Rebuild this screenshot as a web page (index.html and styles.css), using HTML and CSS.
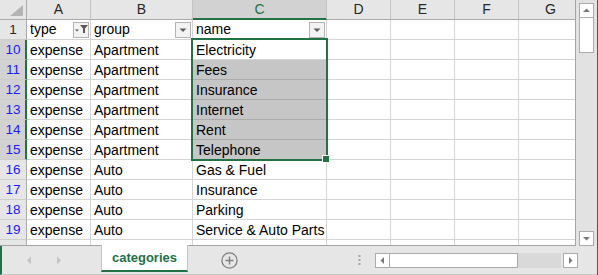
FILE: index.html
```html
<!DOCTYPE html>
<html lang="en">
<head>
    <meta charset="UTF-8">
    <meta name="viewport" content="width=device-width, initial-scale=1.0">
    <title>categories</title>
    <link rel="stylesheet" href="styles.css">
</head>
<body>
<div class="window">
    <div class="main">
        <div class="sheet">
            <div class="row">
                <div class="corner"><svg width="14" height="12" viewBox="0 0 14 12"><polygon points="13,0 13,11 0,11" fill="#b4b4b4"/></svg></div>
                <div class="colhead">A</div>
                <div class="colhead">B</div>
                <div class="colhead active">C</div>
                <div class="colhead">D</div>
                <div class="colhead">E</div>
                <div class="colhead">F</div>
                <div class="colhead">G</div>
            </div>
            <div class="row">
                <div class="rowhead plain">1</div>
                <div class="cell filter">type
                    <span class="dd"><svg width="14" height="14" viewBox="0 0 14 14"><path d="M6 2H14L11 5.5V10H9V5.5Z" fill="#595959"/><path d="M1 6.5H5L3 8.5Z" fill="#595959"/></svg></span>
                </div>
                <div class="cell filter">group
                    <span class="dd"><svg width="14" height="14" viewBox="0 0 14 14"><path d="M3.5 5.5H10.5L7 9Z" fill="#606060"/></svg></span>
                </div>
                <div class="cell filter">name
                    <span class="dd"><svg width="14" height="14" viewBox="0 0 14 14"><path d="M3.5 5.5H10.5L7 9Z" fill="#606060"/></svg></span>
                </div>
                <div class="cell"></div><div class="cell"></div><div class="cell"></div><div class="cell"></div>
            </div>
            <div class="row">
                <div class="rowhead sel">10</div>
                <div class="cell">expense</div><div class="cell">Apartment</div><div class="cell">Electricity</div>
                <div class="cell"></div><div class="cell"></div><div class="cell"></div><div class="cell"></div>
            </div>
            <div class="row">
                <div class="rowhead sel">11</div>
                <div class="cell">expense</div><div class="cell">Apartment</div><div class="cell sel">Fees</div>
                <div class="cell"></div><div class="cell"></div><div class="cell"></div><div class="cell"></div>
            </div>
            <div class="row">
                <div class="rowhead sel">12</div>
                <div class="cell">expense</div><div class="cell">Apartment</div><div class="cell sel">Insurance</div>
                <div class="cell"></div><div class="cell"></div><div class="cell"></div><div class="cell"></div>
            </div>
            <div class="row">
                <div class="rowhead sel">13</div>
                <div class="cell">expense</div><div class="cell">Apartment</div><div class="cell sel">Internet</div>
                <div class="cell"></div><div class="cell"></div><div class="cell"></div><div class="cell"></div>
            </div>
            <div class="row">
                <div class="rowhead sel">14</div>
                <div class="cell">expense</div><div class="cell">Apartment</div><div class="cell sel">Rent</div>
                <div class="cell"></div><div class="cell"></div><div class="cell"></div><div class="cell"></div>
            </div>
            <div class="row">
                <div class="rowhead sel">15</div>
                <div class="cell">expense</div><div class="cell">Apartment</div><div class="cell sel">Telephone</div>
                <div class="cell"></div><div class="cell"></div><div class="cell"></div><div class="cell"></div>
            </div>
            <div class="row">
                <div class="rowhead">16</div>
                <div class="cell">expense</div><div class="cell">Auto</div><div class="cell">Gas &amp; Fuel</div>
                <div class="cell"></div><div class="cell"></div><div class="cell"></div><div class="cell"></div>
            </div>
            <div class="row">
                <div class="rowhead">17</div>
                <div class="cell">expense</div><div class="cell">Auto</div><div class="cell">Insurance</div>
                <div class="cell"></div><div class="cell"></div><div class="cell"></div><div class="cell"></div>
            </div>
            <div class="row">
                <div class="rowhead">18</div>
                <div class="cell">expense</div><div class="cell">Auto</div><div class="cell">Parking</div>
                <div class="cell"></div><div class="cell"></div><div class="cell"></div><div class="cell"></div>
            </div>
            <div class="row">
                <div class="rowhead">19</div>
                <div class="cell">expense</div><div class="cell">Auto</div><div class="cell">Service &amp; Auto Parts</div>
                <div class="cell"></div><div class="cell"></div><div class="cell"></div><div class="cell"></div>
            </div>
            <div class="row">
                <div class="rowhead"></div>
                <div class="cell"></div><div class="cell"></div><div class="cell"></div>
                <div class="cell"></div><div class="cell"></div><div class="cell"></div><div class="cell"></div>
            </div>

            <!-- selection C10:C15 -->
            <div class="selection"></div>
            <div class="fill-handle"></div>
        </div>

        <div class="vscroll">
            <div class="sbtn"><svg width="13" height="13" viewBox="0 0 13 13"><path d="M3 8H10L6.5 4.5Z" fill="#7a7a7a"/></svg></div>
            <div class="vthumb"></div>
            <div class="spacer"></div>
            <div class="sbtn"><svg width="13" height="13" viewBox="0 0 13 13"><path d="M3 5H10L6.5 8.5Z" fill="#7a7a7a"/></svg></div>
        </div>
    </div>

    <div class="tabbar">
        <div class="tab-nav">
            <svg width="6" height="9" viewBox="0 0 6 9"><path d="M5 0.5V8.5L1 4.5Z" fill="#c3c3c3"/></svg>
            <svg width="6" height="9" viewBox="0 0 6 9"><path d="M1 0.5V8.5L5 4.5Z" fill="#c3c3c3"/></svg>
        </div>
        <div class="tab">categories</div>
        <svg class="add" width="17" height="17" viewBox="0 0 17 17"><circle cx="8.5" cy="8.5" r="7.6" fill="none" stroke="#7f7f7f" stroke-width="1.3"/><path d="M8.5 4.5V12.5M4.5 8.5H12.5" stroke="#7f7f7f" stroke-width="1.4"/></svg>
        <svg class="split" width="3" height="11" viewBox="0 0 3 11"><rect x="0.5" y="0" width="2" height="2" fill="#a6a6a6"/><rect x="0.5" y="4" width="2" height="2" fill="#a6a6a6"/><rect x="0.5" y="8" width="2" height="2" fill="#a6a6a6"/></svg>
        <div class="hscroll">
            <div class="sbtn"><svg width="13" height="13" viewBox="0 0 13 13"><path d="M8 3V10L4.5 6.5Z" fill="#7a7a7a"/></svg></div>
            <div class="hthumb"></div>
            <div class="htrack"></div>
            <div class="sbtn right"><svg width="13" height="13" viewBox="0 0 13 13"><path d="M5 3V10L8.5 6.5Z" fill="#7a7a7a"/></svg></div>
        </div>
    </div>
</div>
</body>
</html>
```

FILE: styles.css
```css
* {
    box-sizing: border-box;
}
body {
    margin: 0;
    font-family: "Liberation Sans", Arial, sans-serif;
    background: #fff;
}
.window {
    width: 598px;
    height: 275px;
    border-right: 1px solid #217346;
    background: #e6e6e6;
    overflow: hidden;
}
.main {
    display: flex;
}
.sheet {
    position: relative;
    width: 576px;
    height: 246px;
    overflow: hidden;
    background: #fff;
    border-right: 1px solid #a5a5a5;
    border-bottom: 1px solid #a5a5a5;
}
.row {
    display: grid;
    grid-template-columns: 27px 64px 102px 134px 64px 64px 64px 64px;
    height: 20px;
    width: 583px;
}
.row > div {
    border-right: 1px solid #d4d4d4;
    border-bottom: 1px solid #d4d4d4;
    font-size: 14px;
    line-height: 19px;
    white-space: nowrap;
    overflow: hidden;
}
.row > .corner {
    background: #e6e6e6;
    border-right-color: #ababab;
    border-bottom-color: #ababab;
    display: flex;
    justify-content: flex-end;
    align-items: flex-end;
    padding: 0 2px 2px 0;
}
.row > .colhead {
    background: #e6e6e6;
    border-right-color: #c3c3c3;
    border-bottom-color: #ababab;
    text-align: center;
    color: #262626;
}
.row > .colhead.active {
    background: #d2d2d2;
    color: #217346;
    border-bottom: 2px solid #217346;
    line-height: 18px;
}
.row > .rowhead {
    background: #e6e6e6;
    border-right-color: #ababab;
    border-bottom-color: #cdcdcd;
    text-align: center;
    color: #1a1aff;
    font-size: 13.5px;
}
.row > .rowhead.plain {
    color: #262626;
}
.row > .rowhead.sel {
    background: #d2d2d2;
    border-right: 2px solid #217346;
    padding-left: 1px;
}
.cell {
    padding: 1px 3px 0;
    color: #000;
}
.row > .cell.sel {
    background: #c6c6c6;
    border-bottom-color: #ababab;
}
.cell.filter {
    display: flex;
    justify-content: space-between;
    align-items: center;
    padding: 0 1px 0 3px;
}
.dd {
    display: flex;
    align-items: center;
    justify-content: center;
    width: 16px;
    height: 16px;
    border: 1px solid #b4b4b4;
    background: #f3f3f3;
}
.selection {
    position: absolute;
    left: 191px;
    top: 38px;
    width: 137px;
    height: 123px;
    border: 2px solid #217346;
}
.fill-handle {
    position: absolute;
    left: 322px;
    top: 155px;
    width: 8px;
    height: 8px;
    background: #217346;
    border: 1px solid #fff;
}

/* scrollbars */
.vscroll {
    width: 21px;
    height: 246px;
    padding: 3px 3px 0;
    display: flex;
    flex-direction: column;
    background: #e2e2e2;
}
.sbtn {
    width: 15px;
    height: 15px;
    flex: none;
    border: 1px solid #ababab;
    background: #fff;
    display: flex;
    align-items: center;
    justify-content: center;
}
.vthumb {
    height: 35px;
    flex: none;
    border: 1px solid #ababab;
    border-top: none;
    background: #fff;
}
.spacer {
    flex: 1;
}

.tabbar {
    display: flex;
    align-items: center;
    height: 29px;
    border-left: 2px solid #217346;
    border-bottom: 1px solid #c6c6c6;
}
.tab-nav {
    display: flex;
    gap: 24px;
    width: 99px;
    padding-left: 24px;
}
.tab {
    position: relative;
    align-self: flex-start;
    margin-top: -1px;
    width: 87px;
    height: 27px;
    background: #fff;
    border-left: 1px solid #c3c3c3;
    border-right: 1px solid #c3c3c3;
    border-bottom: 2px solid #217346;
    color: #217346;
    font-weight: bold;
    font-size: 13px;
    text-align: center;
    line-height: 25px;
}
.add {
    margin-left: 33px;
}
.split {
    margin-left: 120px;
}
.hscroll {
    display: flex;
    margin-left: 14px;
    width: 203px;
    height: 15px;
}
.hthumb {
    width: 128px;
    border: 1px solid #ababab;
    border-left: none;
    background: #fff;
}
.htrack {
    width: 43px;
    background: #d9d9d9;
}
.sbtn.right {
    margin-left: 2px;
}
```
